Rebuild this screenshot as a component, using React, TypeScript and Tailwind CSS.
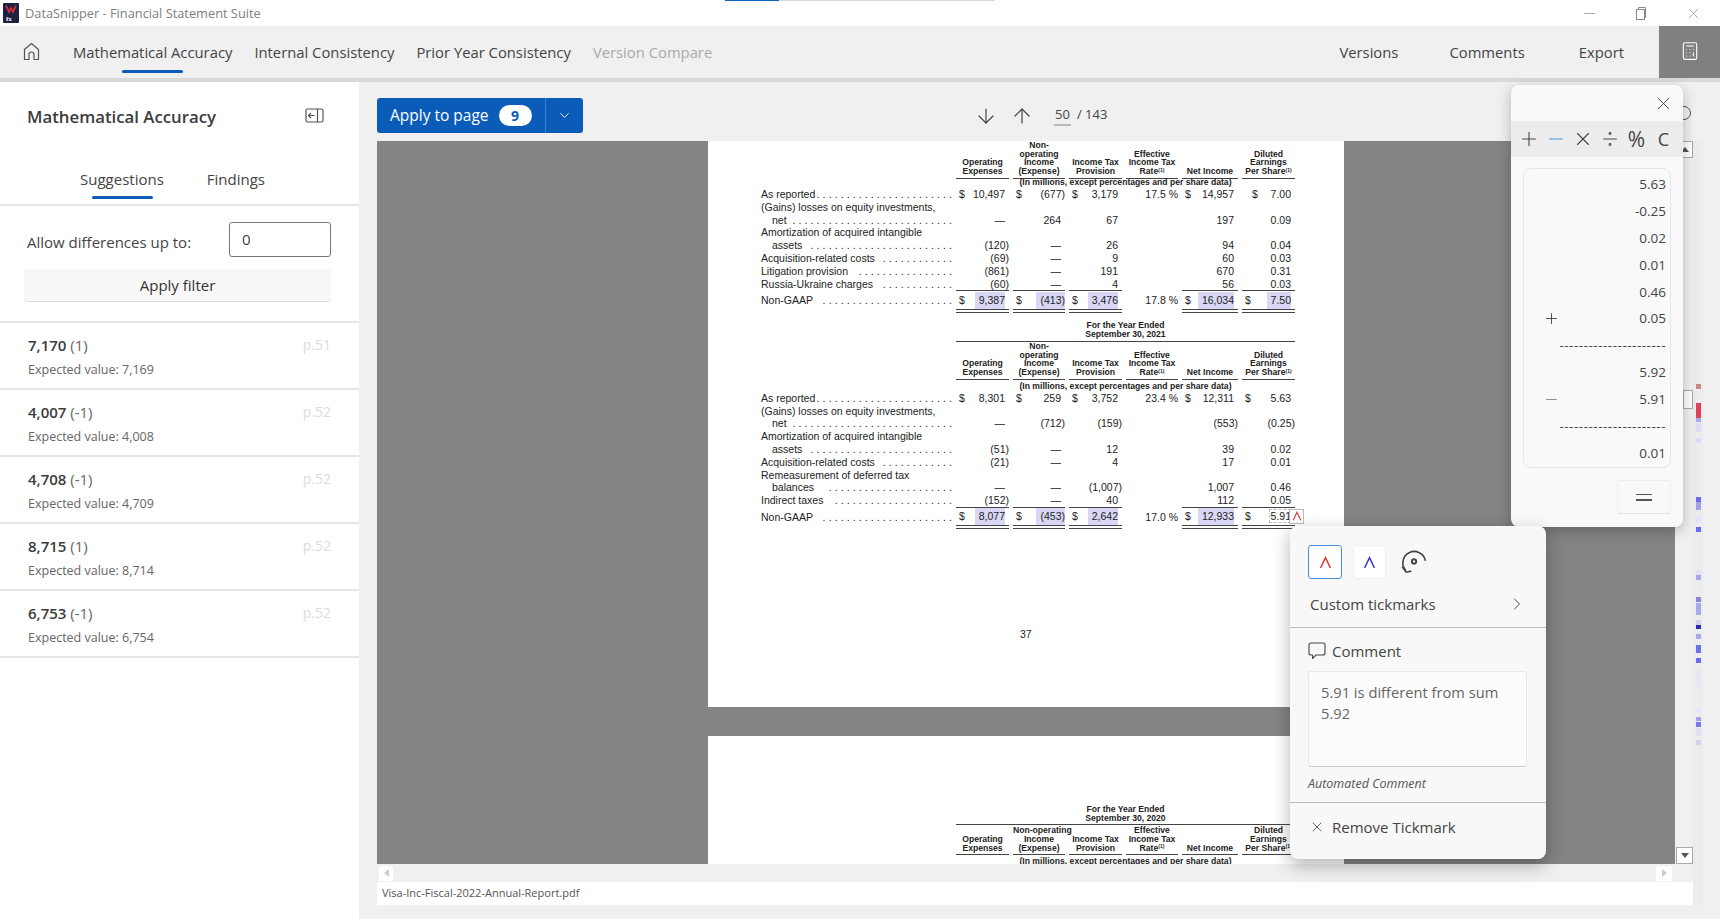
import { ArrowDown, ArrowUp, Calculator, ChevronDown, ChevronRight, Divide, Minus, Plus, X } from "lucide-react";

const ui = "font-['Open_Sans',sans-serif]";
const pdf = "font-['Liberation_Sans',Arial,sans-serif]";
const grid = "grid grid-cols-[191px_53px_52px_53px_52px_56px_53px] gap-x-[4px]";

type Row = { label: string; indent?: boolean; dots?: number; cells?: string[] };

const table2020Head = [
    ["Operating", "Expenses"],
    ["Non-operating", "Income", "(Expense)"],
    ["Income Tax", "Provision"],
    ["Effective", "Income Tax", "Rate^"],
    ["Net Income"],
    ["Diluted", "Earnings", "Per Share^"],
];

const tableHead = [
    ["Operating", "Expenses"],
    ["Non-", "operating", "Income", "(Expense)"],
    ["Income Tax", "Provision"],
    ["Effective", "Income Tax", "Rate^"],
    ["Net Income"],
    ["Diluted", "Earnings", "Per Share^"],
];

const rows2022: Row[] = [
    { label: "As reported", dots: 23, cells: ["$10,497", "$(677)", "$3,179", "17.5 %", "$14,957", "$7.00"] },
    { label: "(Gains) losses on equity investments," },
    { label: "net", indent: true, dots: 27, cells: ["—", "264", "67", "", "197", "0.09"] },
    { label: "Amortization of acquired intangible" },
    { label: "assets", indent: true, dots: 24, cells: ["(120)", "—", "26", "", "94", "0.04"] },
    { label: "Acquisition-related costs", dots: 12, cells: ["(69)", "—", "9", "", "60", "0.03"] },
    { label: "Litigation provision", dots: 16, cells: ["(861)", "—", "191", "", "670", "0.31"] },
    { label: "Russia-Ukraine charges", dots: 12, cells: ["(60)", "—", "4", "", "56", "0.03"] },
];

const rows2021: Row[] = [
    { label: "As reported", dots: 23, cells: ["$8,301", "$259", "$3,752", "23.4 %", "$12,311", "$5.63"] },
    { label: "(Gains) losses on equity investments," },
    { label: "net", indent: true, dots: 27, cells: ["—", "(712)", "(159)", "", "(553)", "(0.25)"] },
    { label: "Amortization of acquired intangible" },
    { label: "assets", indent: true, dots: 24, cells: ["(51)", "—", "12", "", "39", "0.02"] },
    { label: "Acquisition-related costs", dots: 12, cells: ["(21)", "—", "4", "", "17", "0.01"] },
    { label: "Remeasurement of deferred tax" },
    { label: "balances", indent: true, dots: 21, cells: ["—", "—", "(1,007)", "", "1,007", "0.46"] },
    { label: "Indirect taxes", dots: 20, cells: ["(152)", "—", "40", "", "112", "0.05"] },
];

const suggestions = [
    { value: "7,170", diff: "(1)", expected: "7,169", page: "p.51" },
    { value: "4,007", diff: "(-1)", expected: "4,008", page: "p.52" },
    { value: "4,708", diff: "(-1)", expected: "4,709", page: "p.52" },
    { value: "8,715", diff: "(1)", expected: "8,714", page: "p.52" },
    { value: "6,753", diff: "(-1)", expected: "6,754", page: "p.52" },
];

// page markers on the scrollbar strip
const markers = [
    { top: 384, h: 5, c: "#c98a8a" },
    { top: 403, h: 15, c: "#e0405a" },
    { top: 418, h: 4, c: "#a9a9f0" },
    { top: 423, h: 9, c: "#dcdcf5" },
    { top: 438, h: 5, c: "#dcdcf5" },
    { top: 497, h: 5, c: "#6a6af0" },
    { top: 502, h: 8, c: "#a0a0ec" },
    { top: 517, h: 6, c: "#e4e4f8" },
    { top: 527, h: 5, c: "#6a6af0" },
    { top: 570, h: 5, c: "#e0e0f6" },
    { top: 575, h: 5, c: "#a5a5ea" },
    { top: 597, h: 5, c: "#8888e0" },
    { top: 603, h: 12, c: "#a8a8ee" },
    { top: 620, h: 5, c: "#d0d0f0" },
    { top: 625, h: 4, c: "#2a2ab0" },
    { top: 634, h: 5, c: "#a8a8e8" },
    { top: 645, h: 8, c: "#7070ea" },
    { top: 658, h: 5, c: "#6a6af5" },
    { top: 670, h: 17, c: "#e6e6f8" },
    { top: 708, h: 4, c: "#e6e6f8" },
    { top: 717, h: 4, c: "#a0a0ee" },
    { top: 722, h: 5, c: "#7777ee" },
    { top: 728, h: 8, c: "#e0e0f6" },
    { top: 740, h: 5, c: "#d0d0f2" },
];

function Label({ text, indent, dots }: { text: string; indent?: boolean; dots?: number }) {
    return (
        <div className={`flex justify-between whitespace-nowrap ${indent ? "pl-[11px]" : ""}`}>
            <span>{text}</span>
            {dots ? <span className="-mr-[3px] tracking-[3.1px]">{".".repeat(dots)}</span> : null}
        </div>
    );
}

function Value({ v, hl, inset }: { v: string; hl?: boolean; inset?: boolean }) {
    const dollar = v.startsWith("$");
    const text = dollar ? v.slice(1) : v;
    return (
        <div className={`flex justify-between ${inset ? "pl-[10px]" : "pl-[3px]"} ${text.endsWith(")") || text.endsWith("%") ? "pr-0" : "pr-[4px]"}`}>
            <span>{dollar ? "$" : ""}</span>
            <span className={hl ? "bg-[#d8d8f6] pl-[4px]" : ""}>{text}</span>
        </div>
    );
}

function TableHeader({ head, tall }: { head: string[][]; tall?: boolean }) {
    return (
        <div className={`${grid} ${tall ? "h-[38px]" : "h-[35px]"} text-[8.6px] font-bold leading-[8.67px] text-[#222]`}>
            <div />
            {head.map((lines, i) => (
                <div key={i} className="flex flex-col justify-end border-b-[1.5px] border-[#444] pb-[2px] text-center whitespace-nowrap">
                    {lines.map((l) => (
                        <div key={l}>
                            {l.replace("^", "")}
                            {l.endsWith("^") && <sup className="text-[5px] leading-none">(1)</sup>}
                        </div>
                    ))}
                </div>
            ))}
        </div>
    );
}

function Millions() {
    return (
        <div className={`${grid} h-[12px] text-[8.6px] font-bold leading-[12px] text-[#222]`}>
            <div className="col-start-2 col-span-6 text-center">(In millions, except percentages and per share data)</div>
        </div>
    );
}

function TableRows({ rows, inset }: { rows: Row[]; inset?: boolean }) {
    return (
        <div className={`${grid} text-[10.5px] leading-[12.8px] text-[#222]`}>
            {rows.map((r) => (
                <div key={r.label} className="contents">
                    <Label text={r.label} indent={r.indent} dots={r.dots} />
                    {(r.cells ?? ["", "", "", "", "", ""]).map((c, i) => (
                        <Value key={i} v={c} inset={inset && i === 5} />
                    ))}
                </div>
            ))}
        </div>
    );
}

function Totals({ cells, tick }: { cells: string[]; tick?: boolean }) {
    return (
        <div className={`${grid} h-[21px] text-[10.5px] leading-[17px] text-[#222]`}>
            <div className="pt-[2px]">
                <Label text="Non-GAAP" dots={22} />
            </div>
            {cells.map((c, i) => {
                if (i === 3) return <div key={i} className="pt-[2px]"><Value v={c} /></div>;
                return (
                    <div key={i} className="relative border-t-[1.5px] border-t-[#444] border-b-[#444] pt-[0.5px] [border-bottom-style:double] [border-bottom-width:4px]">
                        <Value v={c} hl={!(tick && i === 5)} />
                        {tick && i === 5 && (
                            <>
                                <div className="absolute left-[27px] top-[1px] h-[14px] w-[22px] border border-r-0 border-dashed border-[#bbb]" />
                                <div className="absolute left-[47px] top-[1px] flex h-[15px] w-[15px] items-center justify-center border border-[#bbb] bg-white/70">
                                    <Caret color="#e03030" size={10} />
                                </div>
                            </>
                        )}
                    </div>
                );
            })}
        </div>
    );
}

function YearHeading({ text }: { text: string }) {
    return (
        <div className={`${grid} text-[8.6px] font-bold leading-[8.67px] text-[#222]`}>
            <div className="col-start-2 col-span-6 border-b-[1.5px] border-[#444] pb-[2px] text-center">
                <div>For the Year Ended</div>
                <div>{text}</div>
            </div>
        </div>
    );
}

function Caret({ color, size }: { color: string; size: number }) {
    return (
        <svg width={size} height={size} viewBox="0 0 12 12" fill="none" stroke={color} strokeWidth="1.3">
            <path d="M1.5 11 6 1.5 10.5 11" />
        </svg>
    );
}

function PdfViewer() {
    return (
        <div className={`${pdf} h-[723px] w-[1298px] shrink-0 overflow-hidden bg-[#848484] pl-[331px]`}>
            <div className="h-[566px] w-[636px] bg-white pl-[53px]">
                <TableHeader head={tableHead} />
                <Millions />
                <TableRows rows={rows2022} inset />
                <Totals cells={["$9,387", "$(413)", "$3,476", "17.8 %", "$16,034", "$7.50"]} />
                <div className="h-[10px]" />
                <YearHeading text="September 30, 2021" />
                <TableHeader head={tableHead} tall />
                <Millions />
                <TableRows rows={rows2021} />
                <Totals cells={["$8,077", "$(453)", "$2,642", "17.0 %", "$12,933", "$5.91"]} tick />
                <div className="mt-[100px] pl-[259px] text-[10.5px] leading-[12px] text-[#222]">37</div>
            </div>
            <div className="mt-[29px] h-[200px] w-[636px] bg-white pl-[53px] pt-[69px]">
                <YearHeading text="September 30, 2020" />
                <div className="-mt-[5px]">
                    <TableHeader head={table2020Head} />
                </div>
                <Millions />
            </div>
        </div>
    );
}

function Logo() {
    return (
        <svg width="16" height="20" viewBox="0 0 16 20">
            <rect width="16" height="20" rx="1" fill="#1b2140" />
            <path d="M3 2.5 6 9l2-4 2 4 3-6.500" fill="none" stroke="#d8283c" strokeWidth="1.8" />
            <text x="3" y="17.500" fill="#fff" fontSize="7" fontWeight="700" fontFamily="Liberation Serif, serif">fx</text>
        </svg>
    );
}

function TitleBar() {
    return (
        <div className="relative flex h-[26px] shrink-0 items-center bg-white pl-[3px]">
            <Logo />
            <span className={`${ui} ml-[6px] pt-[1px] text-[12.8px] text-[#808080]`}>DataSnipper - Financial Statement Suite</span>
            <div className="absolute left-[725px] top-0 h-px w-[54px] bg-[#0a66c2]" />
            <div className="absolute left-[779px] top-0 h-px w-[216px] bg-[#d8d8d8]" />
            <div className="ml-auto flex items-center text-[#8a8a8a]">
                <div className="flex w-[52px] justify-center"><div className="h-px w-[11px] bg-[#aaa]" /></div>
                <div className="flex w-[52px] justify-center">
                    <svg width="12" height="14" viewBox="0 0 12 14" fill="none" stroke="#888" strokeWidth="1">
                        <rect x="1.500" y="3.500" width="8" height="10" />
                        <path d="M3.500 3.500v-2h7v10h-1" />
                    </svg>
                </div>
                <div className="flex w-[53px] justify-center"><X size={17} strokeWidth={1} /></div>
            </div>
        </div>
    );
}

function NavBar() {
    return (
        <div className={`${ui} relative z-10 flex h-[56px] shrink-0 items-stretch border-b-[4px] border-[#d9d9d9] bg-[#f0f0f0] text-[14.8px] text-[#444]`}>
            <div className="flex w-[73px] items-center justify-center pr-[11px] pb-[1px]">
                <svg width="19" height="19" viewBox="0 0 19 19" fill="none" stroke="#555" strokeWidth="1.200">
                    <path d="M2.500 17.500V7.500L9.500 1.500l7 6v10h-4.500v-5a2.500 2.500 0 0 0-5 0v5z" strokeLinejoin="round" />
                </svg>
            </div>
            <div className="flex gap-[22px]">
                <div className="relative flex items-center">
                    Mathematical Accuracy
                    <div className="absolute left-[49px] bottom-[5px] h-[3px] w-[61px] rounded-full bg-[#0a5cb8]" />
                </div>
                <div className="flex items-center">Internal Consistency</div>
                <div className="flex items-center">Prior Year Consistency</div>
                <div className="flex items-center text-[#aaa]">Version Compare</div>
            </div>
            <div className="ml-auto flex items-center">
                <span>Versions</span>
                <span className="ml-[51px]">Comments</span>
                <span className="ml-[54px]">Export</span>
            </div>
            <div className="ml-[35px] flex w-[61px] items-center justify-center bg-[#808080] pb-[3px]">
                <Calculator size={20} strokeWidth={1.300} className="text-white" />
            </div>
        </div>
    );
}

function Sidebar() {
    return (
        <div className={`${ui} w-[359px] shrink-0 bg-white text-[#444]`}>
            <div className="flex h-[71px] items-center pl-[27px] pb-[2px]">
                <h2 className="text-[16.8px] font-semibold text-[#3c3c3c]">Mathematical Accuracy</h2>
                <svg className="ml-[89px] -mt-[3px]" width="19" height="15" viewBox="0 0 19 15" fill="none" stroke="#555" strokeWidth="1.200">
                    <rect x="1" y="1" width="17" height="13" rx="1.500" />
                    <path d="M12.500 1v13M9.500 7.500H3.500M6 5 3.500 7.500 6 10" />
                </svg>
            </div>
            <div className="flex h-[53px] border-b-2 border-[#e6e6e6] pl-[80px] text-[15px]">
                <div className="relative pt-[15px]">
                    Suggestions
                    <div className="absolute left-[12px] bottom-[5px] h-[3px] w-[61px] rounded-full bg-[#0a5cb8]" />
                </div>
                <div className="ml-[43px] pt-[15px]">Findings</div>
            </div>
            <div className="flex h-[51px] items-end pl-[27px]">
                <span className="pb-[4px] text-[15px]">Allow differences up to:</span>
                <div className="ml-auto mr-[28px] flex h-[35px] w-[102px] items-center rounded-[3px] border border-[#777] pl-[12px] text-[15px]">0</div>
            </div>
            <div className="ml-[24px] mt-[12px] flex h-[33px] w-[307px] items-center justify-center rounded-[3px] border-b border-[#ddd] bg-[#f8f8f8] text-[15px] text-[#333]">
                Apply filter
            </div>
            <div className="mt-[19px] border-t-2 border-[#e6e6e6]">
                {suggestions.map((s) => (
                    <div key={s.value} className="flex h-[67px] justify-between border-b-2 border-[#e6e6e6] pl-[28px] pr-[28px] pt-[11px]">
                        <div>
                            <div className="text-[15px] leading-[22px]">
                                <span className="font-semibold text-[#3c3c3c]">{s.value}</span>{" "}
                                <span className="text-[#666]">{s.diff}</span>
                            </div>
                            <div className="text-[12.500px] leading-[27px] text-[#666]">Expected value: {s.expected}</div>
                        </div>
                        <div className="text-[14px] leading-[22px] text-[#dcdcdc]">{s.page}</div>
                    </div>
                ))}
            </div>
        </div>
    );
}

function Toolbar() {
    return (
        <div className={`${ui} flex h-[59px] shrink-0 items-start pt-[16px] text-[#444]`}>
            <div className="flex h-[35px] w-[206px] items-center rounded-[3px] bg-[#0a5cb8] text-white">
                <span className="pl-[13px] text-[15.500px]">Apply to page</span>
                <span className="ml-[10px] flex h-[21px] w-[33px] items-center justify-center rounded-full bg-white text-[14px] font-bold text-[#0a5cb8]">9</span>
                <span className="ml-[13px] h-full w-px bg-[#3d7ec9]" />
                <span className="flex flex-1 justify-center"><ChevronDown size={15} strokeWidth={1.500} /></span>
            </div>
            <ArrowDown className="ml-[391px] mt-[6px]" size={24} strokeWidth={1.200} />
            <ArrowUp className="ml-[12px] mt-[6px]" size={24} strokeWidth={1.200} />
            <div className="ml-[20px] mt-[6px] flex text-[13px] leading-[20px]">
                <span className="border-b-2 border-[#bbb] px-px">50</span>
                <span className="ml-[6px]">/ 143</span>
            </div>
            <div className="ml-[570px] mt-[8px] h-[14px] w-[14px] rounded-full border-[1.500px] border-[#555]" />
        </div>
    );
}

function Scrollbars() {
    return (
        <div className="flex w-[18px] shrink-0 flex-col items-end bg-[#f0f0f0]">
            <div className="flex h-[17px] w-[17px] items-center justify-center border border-[#aaa] bg-white text-[#555]">
                <span className="h-0 w-0 border-x-[4px] border-b-[5px] border-x-transparent border-b-[#555]" />
            </div>
            <div className="mt-[232px] h-[19px] w-[10px] border border-[#aaa] bg-white" />
            <div className="mt-auto flex h-[17px] w-[17px] items-center justify-center border border-[#aaa] bg-white">
                <span className="h-0 w-0 border-x-[4px] border-t-[5px] border-x-transparent border-t-[#555]" />
            </div>
        </div>
    );
}

function MainArea() {
    return (
        <div className="relative flex-1 pl-[18px]">
            <Toolbar />
            <div className="flex h-[764px] w-[1326px]">
                <div className="flex w-[1316px] flex-col">
                    <div className="flex">
                        <PdfViewer />
                        <Scrollbars />
                    </div>
                    <div className="flex h-[18px] shrink-0 items-center justify-between pl-[2px] pr-[21px]">
                        <div className="flex h-[15px] w-[14px] items-center justify-center bg-white">
                            <span className="h-0 w-0 border-y-[4px] border-r-[5px] border-y-transparent border-r-[#ccc]" />
                        </div>
                        <div className="flex h-[15px] w-[16px] items-center justify-center bg-white">
                            <span className="h-0 w-0 border-y-[4px] border-l-[5px] border-y-transparent border-l-[#ccc]" />
                        </div>
                    </div>
                    <div className={`${ui} flex h-[23px] shrink-0 items-center bg-white pl-[5px] text-[11px] text-[#555]`}>
                        Visa-Inc-Fiscal-2022-Annual-Report.pdf
                    </div>
                </div>
                <div className="h-full w-[10px] bg-[#ececec]" />
            </div>
        </div>
    );
}

function CalcPopup() {
    const lines = ["5.63", "-0.25", "0.02", "0.01", "0.46", "0.05", "dash", "5.92", "5.91", "dash", "0.01"];
    return (
        <div className={`${ui} absolute left-[1511px] top-[85px] z-20 h-[442px] w-[172px] rounded-lg bg-[#f9f9f9] text-[#444] shadow-[0_4px_14px_rgba(0,0,0,0.25)]`}>
            <div className="flex h-[36px] items-center justify-end pr-[9px]"><X size={21} strokeWidth={1.100} /></div>
            <div className="grid h-[36px] grid-cols-[repeat(6,27px)] items-center justify-items-center bg-[#ececec] pl-[4px]">
                <Plus size={22} strokeWidth={1.200} />
                <Minus size={22} strokeWidth={1.200} className="text-[#4a90d9]" />
                <X size={22} strokeWidth={1.200} />
                <Divide size={22} strokeWidth={1.100} />
                <span className="text-[21px] leading-none">%</span>
                <span className="text-[18px] leading-none">C</span>
            </div>
            <div className="relative mx-[12px] mt-[11px] h-[300px] rounded-lg border border-[#e6e6e6] pr-[4px] pt-[2px] text-right text-[13.500px] leading-[26.900px]">
                {lines.map((l, i) => (
                    <div key={i} className="h-[26.900px]">
                        {l === "dash" ? <span className="tracking-[0.500px]">{"-".repeat(22)}</span> : l}
                    </div>
                ))}
                <Plus size={17} strokeWidth={1.300} className="absolute left-[19px] top-[141px]" />
                <Minus size={17} strokeWidth={1.300} className="absolute left-[19px] top-[222px] text-[#888]" />
            </div>
            <div className="ml-[106px] mt-[12px] flex h-[34px] w-[54px] flex-col items-center justify-center gap-[4px] rounded-[3px] border border-[#eee] border-b-[#e2e2e2]">
                <div className="h-[1.500px] w-[16px] bg-[#555]" />
                <div className="h-[1.500px] w-[16px] bg-[#555]" />
            </div>
        </div>
    );
}

function TickPopup() {
    return (
        <div className={`${ui} absolute left-[1290px] top-[526px] z-30 h-[333px] w-[256px] rounded-lg bg-[#f8f8f8] text-[#444] shadow-[0_6px_18px_rgba(0,0,0,0.3)]`}>
            <div className="flex h-[102px] flex-col border-b-[1.500px] border-[#bbb] px-[18px] pt-[19px]">
                <div className="flex items-center">
                    <div className="flex h-[34px] w-[34px] items-center justify-center rounded-[3px] border border-[#4a90d9] bg-white">
                        <Caret color="#e03030" size={13} />
                    </div>
                    <div className="ml-[11px] flex h-[34px] w-[33px] items-center justify-center rounded-[3px] border border-[#eee] bg-white">
                        <Caret color="#3030d8" size={13} />
                    </div>
                    <svg className="ml-[14px]" width="27" height="27" viewBox="0 0 25 25" fill="none" stroke="#444" strokeWidth="1.500">
                        <path d="M23.500 11A10.500 10.500 0 1 0 5.500 20" />
                        <path d="M2 16.500 5.700 21.500 10.500 20.500" />
                        <circle cx="13" cy="11.500" r="2" strokeWidth="1.800" />
                    </svg>
                </div>
                <div className="mt-[13px] flex items-center justify-between pl-[2px] pr-[1px] text-[15px] font-medium leading-[24px]">
                    Custom tickmarks
                    <ChevronRight size={20} strokeWidth={1.200} />
                </div>
            </div>
            <div className="h-[175px] border-b-[1.500px] border-[#bbb] px-[18px] pt-[12px]">
                <div className="flex items-center gap-[6px] text-[15px] font-medium leading-[22px]">
                    <svg width="18" height="18" viewBox="0 0 18 18" fill="none" stroke="#444" strokeWidth="1.100">
                        <path d="M3 1h12a2 2 0 0 1 2 2v8a2 2 0 0 1-2 2H8l-3.500 3.500V13H3a2 2 0 0 1-2-2V3a2 2 0 0 1 2-2z" strokeLinejoin="round" />
                    </svg>
                    Comment
                </div>
                <div className="mt-[9px] h-[96px] w-[219px] rounded-[3px] border border-[#e8e8e8] border-b-[#ccc] bg-[#fcfcfc] pl-[12px] pr-[8px] pt-[10px] text-[14.7px] leading-[20.500px] text-[#666]">
                    5.91 is different from sum 5.92
                </div>
                <div className="mt-[8px] text-[12.500px] italic leading-[18px] text-[#555]">Automated Comment</div>
            </div>
            <div className="flex items-center gap-[7px] pl-[19px] pt-[13px] text-[15px] font-medium leading-[22px]">
                <X size={16} strokeWidth={1.200} />
                Remove Tickmark
            </div>
        </div>
    );
}

export default function App() {
    return (
        <div className="relative flex h-[919px] w-[1720px] flex-col overflow-hidden bg-[#f0f0f0]">
            <TitleBar />
            <NavBar />
            <div className="flex flex-1">
                <Sidebar />
                <MainArea />
            </div>
            {markers.map((m) => (
                <div key={m.top} className="absolute left-[1696px] w-[5px]" style={{ top: m.top, height: m.h, backgroundColor: m.c }} />
            ))}
            <CalcPopup />
            <TickPopup />
        </div>
    );
}
